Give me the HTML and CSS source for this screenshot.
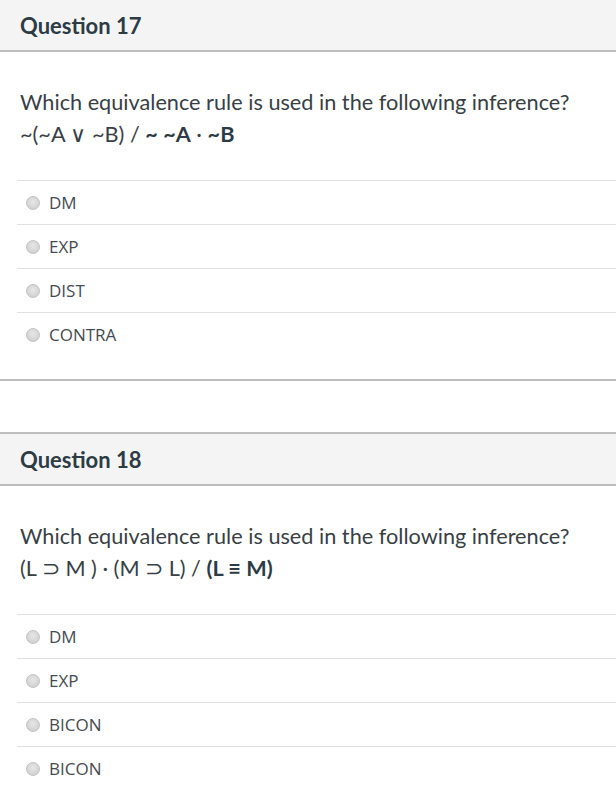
FILE: index.html
```html
<!DOCTYPE html>
<html>
<head>
<meta charset="utf-8">
<link rel="stylesheet" href="styles.css">
</head>
<body>
<div class="page">
  <section class="question">
    <div class="q-header">Question 17</div>
    <div class="q-body">
      <div class="q-text">Which equivalence rule is used in the following inference?<br>~(~A ∨ ~B) / <b>~ ~A</b> · <b>~B</b></div>
      <ul class="answers">
        <li><span class="radio"></span>DM</li>
        <li><span class="radio"></span>EXP</li>
        <li><span class="radio"></span>DIST</li>
        <li><span class="radio"></span>CONTRA</li>
      </ul>
    </div>
  </section>
  <section class="question">
    <div class="q-header">Question 18</div>
    <div class="q-body">
      <div class="q-text">Which equivalence rule is used in the following inference?<br>(L ⊃ M ) · (M ⊃ L) / <b>(L ≡ M)</b></div>
      <ul class="answers">
        <li><span class="radio"></span>DM</li>
        <li><span class="radio"></span>EXP</li>
        <li><span class="radio"></span>BICON</li>
        <li><span class="radio"></span>BICON</li>
      </ul>
    </div>
  </section>
</div>
</body>
</html>
```
FILE: styles.css
```css
html, body {
  margin: 0;
  padding: 0;
  background: #ffffff;
}
body {
  font-family: Lato, "Open Sans", sans-serif;
  color: #2d3b45;
  overflow: hidden;
}
.page {
  margin-top: -2px;
  display: flex;
  flex-direction: column;
  gap: 51px;
}
.question {
  border-top: 2px solid #bdbdbd;
  border-bottom: 2px solid #bdbdbd;
}
.q-header {
  height: 52px;
  box-sizing: border-box;
  background: #f4f4f4;
  border-bottom: 2px solid #bdbdbd;
  padding: 11px 0 0 20px;
  font-size: 22px;
  font-weight: 700;
  line-height: 30px;
  color: #2d3b45;
}
.q-text {
  padding: 34px 20px 0 20px;
  font-size: 21.7px;
  line-height: 32px;
  color: #383f45;
}
.q-text b {
  font-weight: 700;
  color: #2d3b45;
}
.answers {
  list-style: none;
  margin: 30px 0 0 17px;
  padding: 0 0 23px 0;
}
.answers li {
  height: 44px;
  box-sizing: border-box;
  border-top: 1px solid #e0e0e0;
  display: flex;
  align-items: center;
  gap: 9px;
  padding-left: 9px;
  font-family: "Open Sans", sans-serif;
  font-size: 17px;
  color: #454b50;
}
.radio {
  width: 14px;
  height: 14px;
  border-radius: 50%;
  box-sizing: border-box;
  border: 1px solid #c4c4c4;
  background: radial-gradient(circle at 50% 40%, #e6e6e6 0%, #d6d6d6 60%, #c6c6c6 100%);
  flex: none;
}
```
